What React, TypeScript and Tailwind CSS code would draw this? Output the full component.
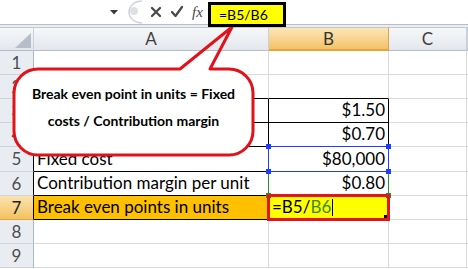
import React from 'react'

type Row = {
  n: number
  a?: string
  b?: React.ReactNode
}

const rows: Row[] = [
  { n: 1 },
  { n: 2 },
  { n: 3, b: '$1.50' },
  { n: 4, b: '$0.70' },
  { n: 5, a: 'Fixed cost', b: '$80,000' },
  { n: 6, a: 'Contribution margin per unit', b: '$0.80' },
  { n: 7, a: 'Break even points in units' },
  { n: 8 },
  { n: 9 },
]

function FormulaBar() {
  return (
    <div className="flex h-[25px] border-b border-[#b9bfc8] bg-white">
      {/* Name box */}
      <div className="flex w-[122px] items-center justify-end pr-[4px]">
        <svg width="8" height="5" viewBox="0 0 8 5">
          <path d="M0 0 L8 0 L4 4.5 Z" fill="#3c3c3c" />
        </svg>
      </div>
      {/* grip + buttons */}
      <svg width="86" height="24" viewBox="0 0 86 24" className="shrink-0">
        <path d="M20 1 A13 11 0 0 0 20 23" fill="none" stroke="#cdd2d9" strokeWidth="1.5" />
        <circle cx="12" cy="11" r="4" fill="#dde1e6" />
        <path d="M30 8 L38 16 M38 8 L30 16" stroke="#4a4a4a" strokeWidth="2.3" strokeLinecap="round" />
        <path d="M50 12 L53.5 16 L60 7" fill="none" stroke="#4a4a4a" strokeWidth="2.3" strokeLinecap="round" strokeLinejoin="round" />
      </svg>
      <span className="-ml-[16px] flex items-center font-['Liberation_Serif',serif] text-[15px] italic text-[#4a4a4a]">
        fx
      </span>
      <div className="flex-1" />
    </div>
  )
}

function HeaderRow() {
  const base = 'border-t border-b border-r border-t-[#c3c9d1] border-b-[#b3bcc7] border-r-[#c9d0d9]'
  const gray = 'bg-linear-to-b from-[#f6f7f9] to-[#e3e7ec] text-[#3f3f3f]'
  return (
    <>
      <div className={`relative ${base} ${gray}`}>
        <svg width="16" height="15" viewBox="0 0 16 15" className="absolute right-[2px] bottom-[2px]">
          <path d="M16 0 L16 15 L0 15 Z" fill="#b6bec9" />
        </svg>
      </div>
      <div className={`flex items-center justify-center text-[17px] ${base} ${gray}`}>A</div>
      <div className="flex items-center justify-center border-t border-b-2 border-r border-t-[#c3c9d1] border-b-[#e6a53b] border-r-[#d7a54c] bg-linear-to-b from-[#fbe6b6] to-[#f3c365] text-[17px] text-[#333]">
        B
      </div>
      <div className={`flex items-center justify-center text-[17px] ${base} ${gray}`}>C</div>
      <div className={`${base} ${gray}`} />
    </>
  )
}

function BodyRow({ row }: { row: Row }) {
  const boxed = row.n >= 3 && row.n <= 7
  const topBoxed = row.n >= 2 && row.n <= 7
  const active = row.n === 7

  const headCls = active
    ? 'bg-linear-to-b from-[#fbe3ae] to-[#f3c25f] text-[#222] border-b-[#e0a640]'
    : 'bg-[#e9edf2] text-[#4d4d4d] border-b-[#cdd4dd]'
  const headR = boxed ? 'border-r-black' : 'border-r-[#a9b8c9]'
  const lineB = topBoxed ? 'border-b-black' : 'border-b-[#d9d9d9]'
  const aR = boxed ? 'border-r-black' : 'border-r-[#d9d9d9]'

  return (
    <>
      <div className={`flex items-center justify-center border-b border-r text-[17px] ${headCls} ${headR}`}>
        {row.n}
      </div>
      <div
        className={`flex items-center overflow-hidden whitespace-nowrap border-b border-r pb-px pl-[3px] text-[17px] ${lineB} ${aR} ${
          active ? 'bg-[#ffc000]' : 'bg-white'
        }`}
      >
        {row.a}
      </div>
      <div
        className={`relative flex items-center justify-end border-b border-r pb-px pr-[3px] text-[17px] ${lineB} ${
          boxed ? 'border-r-black' : 'border-r-[#d9d9d9]'
        } ${active ? 'bg-[#ffff00]' : 'bg-white'}`}
      >
        {row.n === 5 && (
          <div className="absolute -inset-px z-20 border border-[#1c3cff]">
            <span className="absolute -left-[3px] -top-[3px] h-[5px] w-[5px] bg-[#1c3cff]" />
            <span className="absolute -right-[3px] -top-[3px] h-[5px] w-[5px] bg-[#1c3cff]" />
            <span className="absolute -left-[3px] -bottom-[3px] h-[5px] w-[5px] bg-[#1c3cff]" />
            <span className="absolute -right-[3px] -bottom-[3px] h-[5px] w-[5px] bg-[#1c3cff]" />
          </div>
        )}
        {row.n === 6 && (
          <div className="absolute -inset-px z-10 border border-[#2e8b2e]">
            <span className="absolute -left-[3px] -bottom-[3px] h-[5px] w-[5px] bg-[#2e8b2e]" />
            <span className="absolute -right-[3px] -bottom-[3px] h-[5px] w-[5px] bg-[#2e8b2e]" />
          </div>
        )}
        {active ? (
          <>
            <div className="absolute -left-[2px] -top-[2px] -right-[2px] -bottom-[2px] z-30 border-[3px] border-[#e3141c]">
              <span className="absolute right-0 bottom-0 h-[3px] w-[3px] bg-black" />
            </div>
            <span className="mr-auto flex items-center pl-[3px]">
              =B5/<span className="text-[#3c8c0c]">B6</span>
              <span className="ml-[1px] h-[17px] w-px bg-black" />
            </span>
          </>
        ) : (
          row.b
        )}
      </div>
      <div className="border-b border-r border-b-[#d9d9d9] border-r-[#d9d9d9] bg-white" />
      <div className="border-b border-b-[#d9d9d9] bg-white" />
    </>
  )
}

function Callout() {
  return (
    <>
      <svg width="468" height="269" viewBox="0 0 468 269" className="pointer-events-none absolute left-0 top-0 z-40">
        <path
          d="M37 69 L229 69 A24 24 0 0 1 253 93 L253 131 A24 24 0 0 1 229 155 L38 155 A24 24 0 0 1 14 131 L14 93 A24 24 0 0 1 38 69 Z"
          fill="white"
        />
        <path
          d="M180 69 L232 27 L210 69 L229 69 A24 24 0 0 1 253 93 L253 131 A24 24 0 0 1 229 155 L38 155 A24 24 0 0 1 14 131 L14 93 A24 24 0 0 1 38 69 Z"
          fill="none"
          stroke="#e2121b"
          strokeWidth="3"
          strokeLinejoin="round"
        />
      </svg>
      <div className="absolute left-[14px] top-[69px] z-50 flex h-[86px] w-[239px] flex-col items-center justify-center pb-[10px] text-center text-[14px] font-bold leading-[27px] text-black">
        <span>Break even point in units = Fixed</span>
        <span>costs / Contribution margin</span>
      </div>
    </>
  )
}

export default function App() {
  return (
    <div className="relative h-[269px] w-[468px] overflow-hidden bg-white font-[Lato,sans-serif] text-black">
      <FormulaBar />
      <div className="h-[2px] bg-[#eaedf1]" />
      <div className="grid grid-cols-[34px_235px_120px_78px_1fr] grid-rows-[24px_24px_24px_24px_24px_25px_24px_24px_24px_24px]">
        <HeaderRow />
        {rows.map((r) => (
          <BodyRow key={r.n} row={r} />
        ))}
      </div>

      {/* formula highlighted in the bar */}
      <div className="absolute left-[208px] top-[2px] z-50 flex h-[25px] w-[78px] items-center border-[3px] border-black bg-[#ffff00] pl-[8px] text-[14px]">
        =B5/B6
      </div>

      <Callout />
    </div>
  )
}
